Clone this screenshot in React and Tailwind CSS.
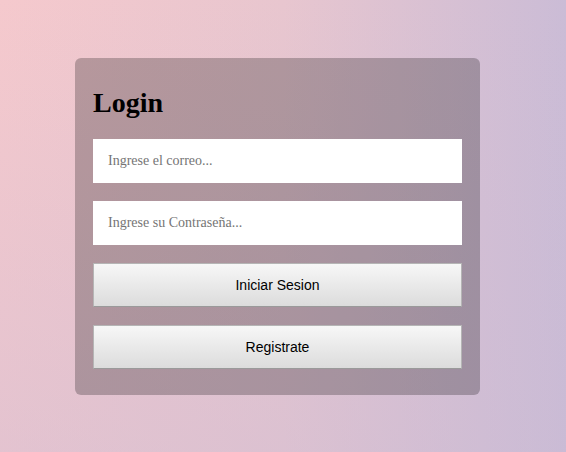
export default function App() {
  return (
    <div className="relative h-[452px] w-full overflow-hidden bg-gradient-to-r from-[#f5c9cd] via-[#e8c6cf] to-[#cbbcd6]">
      <div className="absolute inset-0 bg-gradient-to-b from-transparent to-[#c9bad4]/40" />
      <div className="relative pt-[58px] pl-[75px]">
        <div className="w-[405px] rounded-md bg-black/[0.24] px-[18px] pt-[27px] pb-[26px]">
          <h1 className="mb-[18px] font-['Liberation_Serif',serif] text-[28px] font-bold leading-[36px] text-black">
            Login
          </h1>
          <div className="flex flex-col gap-[18px]">
            <input
              type="text"
              placeholder="Ingrese el correo..."
              className="h-[44px] w-full border-0 bg-white px-[15px] font-['Liberation_Serif',serif] text-[14px] text-black outline-none placeholder:text-[#757575]"
            />
            <input
              type="password"
              placeholder="Ingrese su Contraseña..."
              className="h-[44px] w-full border-0 bg-white px-[15px] font-['Liberation_Serif',serif] text-[14px] text-black outline-none placeholder:text-[#757575]"
            />
            <button className="h-[44px] w-full border border-[#b5b5b5] border-b-[#9a9a9a] bg-gradient-to-b from-[#f7f7f7] to-[#dcdcdc] font-['Liberation_Sans',sans-serif] text-[14px] text-black">
              Iniciar Sesion
            </button>
            <button className="h-[44px] w-full border border-[#b5b5b5] border-b-[#9a9a9a] bg-gradient-to-b from-[#f7f7f7] to-[#dcdcdc] font-['Liberation_Sans',sans-serif] text-[14px] text-black">
              Registrate
            </button>
          </div>
        </div>
      </div>
    </div>
  );
}
